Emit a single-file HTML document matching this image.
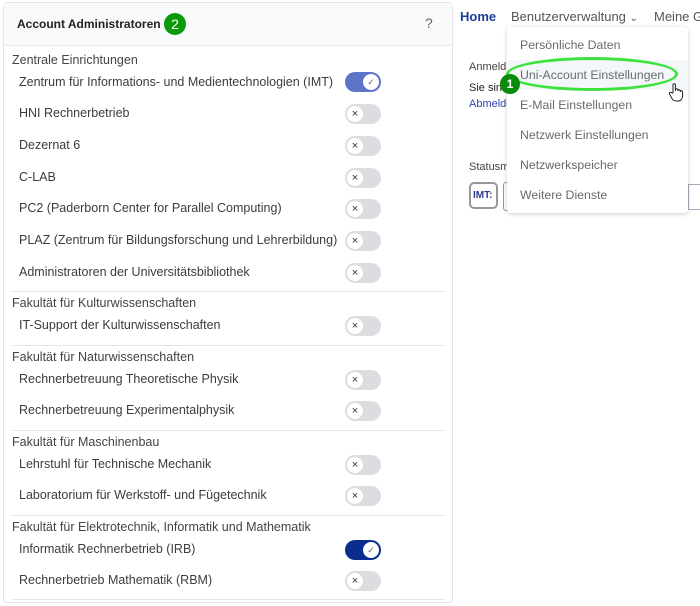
<!DOCTYPE html><html><head><meta charset="utf-8"><style>
body{margin:0;width:700px;height:606px;background:#fff;font-family:"Liberation Sans",sans-serif;position:relative;overflow:hidden;color:#333}
.a{position:absolute;white-space:nowrap}
.panel{position:absolute;left:3px;top:2px;width:450px;height:601px;border:1px solid #e3e5e8;border-radius:4px;box-sizing:border-box}
.hdr{position:absolute;left:0;top:0;width:448px;height:42px;background:#f8f9fa;border-bottom:1px solid #e6e8eb}
.g{font-size:12.5px;color:#444;left:12px}
.r{font-size:12.5px;color:#3c3c3c;left:19px}
.hr{position:absolute;left:12px;width:433px;height:1px;background:#e3e5e8}
.t{position:absolute;left:345px;width:36px;height:20px;border-radius:10px;background:#dcdde0}
.t::after{content:"×";position:absolute;left:2px;top:2px;width:16px;height:16px;border-radius:8px;background:#fff;font-size:11px;line-height:16px;text-align:center;color:#333}
.t.on{background:#5e74c9}.t.on2{background:#0a2d8f}
.t.on::after,.t.on2::after{content:"✓";left:18px;color:#666;font-size:9px}
.m{font-size:12.3px;color:#6a6a6a;left:520px}
</style></head><body>
<div class="panel"><div class="hdr"></div></div>
<div class="a" style="left:17px;top:17px;font-size:12px;font-weight:bold;color:#222">Account Administratoren</div>
<div class="a" style="left:164px;top:13px;width:22px;height:22px;border-radius:11px;background:#0a9a0a;color:#fff;font-size:14px;line-height:22px;text-align:center">2</div>
<div class="a" style="left:425px;top:15px;font-size:14px;color:#666">?</div>
<div class="a g" style="top:53px">Zentrale Einrichtungen</div>
<div class="a r" style="top:75px">Zentrum für Informations- und Medientechnologien (IMT)</div><div class="t on" style="top:72px"></div>
<div class="a r" style="top:106px">HNI Rechnerbetrieb</div><div class="t" style="top:104px"></div>
<div class="a r" style="top:138px">Dezernat 6</div><div class="t" style="top:136px"></div>
<div class="a r" style="top:170px">C-LAB</div><div class="t" style="top:168px"></div>
<div class="a r" style="top:201px">PC2 (Paderborn Center for Parallel Computing)</div><div class="t" style="top:199px"></div>
<div class="a r" style="top:233px">PLAZ (Zentrum für Bildungsforschung und Lehrerbildung)</div><div class="t" style="top:231px"></div>
<div class="a r" style="top:265px">Administratoren der Universitätsbibliothek</div><div class="t" style="top:263px"></div>
<div class="hr" style="top:291px"></div>
<div class="a g" style="top:296px">Fakultät für Kulturwissenschaften</div>
<div class="a r" style="top:318px">IT-Support der Kulturwissenschaften</div><div class="t" style="top:316px"></div>
<div class="hr" style="top:345px"></div>
<div class="a g" style="top:350px">Fakultät für Naturwissenschaften</div>
<div class="a r" style="top:372px">Rechnerbetreuung Theoretische Physik</div><div class="t" style="top:370px"></div>
<div class="a r" style="top:403px">Rechnerbetreuung Experimentalphysik</div><div class="t" style="top:401px"></div>
<div class="hr" style="top:430px"></div>
<div class="a g" style="top:435px">Fakultät für Maschinenbau</div>
<div class="a r" style="top:457px">Lehrstuhl für Technische Mechanik</div><div class="t" style="top:455px"></div>
<div class="a r" style="top:488px">Laboratorium für Werkstoff- und Fügetechnik</div><div class="t" style="top:486px"></div>
<div class="hr" style="top:515px"></div>
<div class="a g" style="top:520px">Fakultät für Elektrotechnik, Informatik und Mathematik</div>
<div class="a r" style="top:542px">Informatik Rechnerbetrieb (IRB)</div><div class="t on2" style="top:540px"></div>
<div class="a r" style="top:573px">Rechnerbetrieb Mathematik (RBM)</div><div class="t" style="top:571px"></div>
<div class="hr" style="top:599px"></div>

<div class="a" style="left:460px;top:9px;font-size:13px;font-weight:bold;color:#1d3c9a">Home</div>
<div class="a" style="left:511px;top:9px;font-size:13px;color:#555">Benutzerverwaltung <span style="font-size:10px">⌄</span></div>
<div class="a" style="left:654px;top:9px;font-size:13px;color:#555">Meine G</div>
<div class="a" style="left:469px;top:61px;font-size:11px;color:#444">Anmeld</div>
<div class="a" style="left:469px;top:82px;font-size:11px;color:#222">Sie sind</div>
<div class="a" style="left:469px;top:98px;font-size:11px;color:#2a44b0">Abmelde</div>
<div class="a" style="left:469px;top:161px;font-size:11px;color:#444">Statusm</div>
<div class="a" style="left:469px;top:182px;width:29px;height:27px;border:2px solid #999;border-radius:5px;box-sizing:border-box;font-size:10px;font-weight:bold;color:#2a3a8a;line-height:23px;padding-left:2px">IMT:</div>
<div class="a" style="left:503px;top:182px;width:8px;height:27px;border:1px solid #999;border-radius:3px"></div>
<div class="a" style="left:688px;top:184px;width:12px;height:24px;border:1px solid #aab"></div>
<div class="a" style="left:507px;top:27px;width:181px;height:186px;background:#fff;border-radius:4px;box-shadow:0 1px 5px rgba(0,0,0,.2)"></div>
<div class="a" style="left:508px;top:60px;width:180px;height:30px;background:#f4f7fa"></div>
<div class="a m" style="top:38px">Persönliche Daten</div>
<div class="a m" style="top:68px">Uni-Account Einstellungen</div>
<div class="a m" style="top:98px">E-Mail Einstellungen</div>
<div class="a m" style="top:128px">Netzwerk Einstellungen</div>
<div class="a m" style="top:158px">Netzwerkspeicher</div>
<div class="a m" style="top:188px">Weitere Dienste</div>
<div class="a" style="left:506px;top:57px;width:172px;height:34px;border:3px solid #3ee23e;border-radius:50%;box-sizing:border-box"></div>
<div class="a" style="left:500px;top:74px;width:20px;height:20px;border-radius:10px;background:#0a8a0a;color:#fff;font-size:12px;font-weight:bold;line-height:20px;text-align:center">1</div>
<svg class="a" style="left:668px;top:82px" width="16" height="20" viewBox="0 0 16 20"><path d="M5 11V3a1.2 1.2 0 0 1 2.4 0v6l0-1a1.2 1.2 0 0 1 2.4 0v1a1.2 1.2 0 0 1 2.4 0v1a1.2 1.2 0 0 1 2.4 0v4c0 3-2 5-4.5 5H8c-2 0-3-1-4-2.5L1.5 12a1.2 1.2 0 0 1 2-1.3z" fill="#fff" stroke="#222" stroke-width="1"/></svg>
</body></html>
